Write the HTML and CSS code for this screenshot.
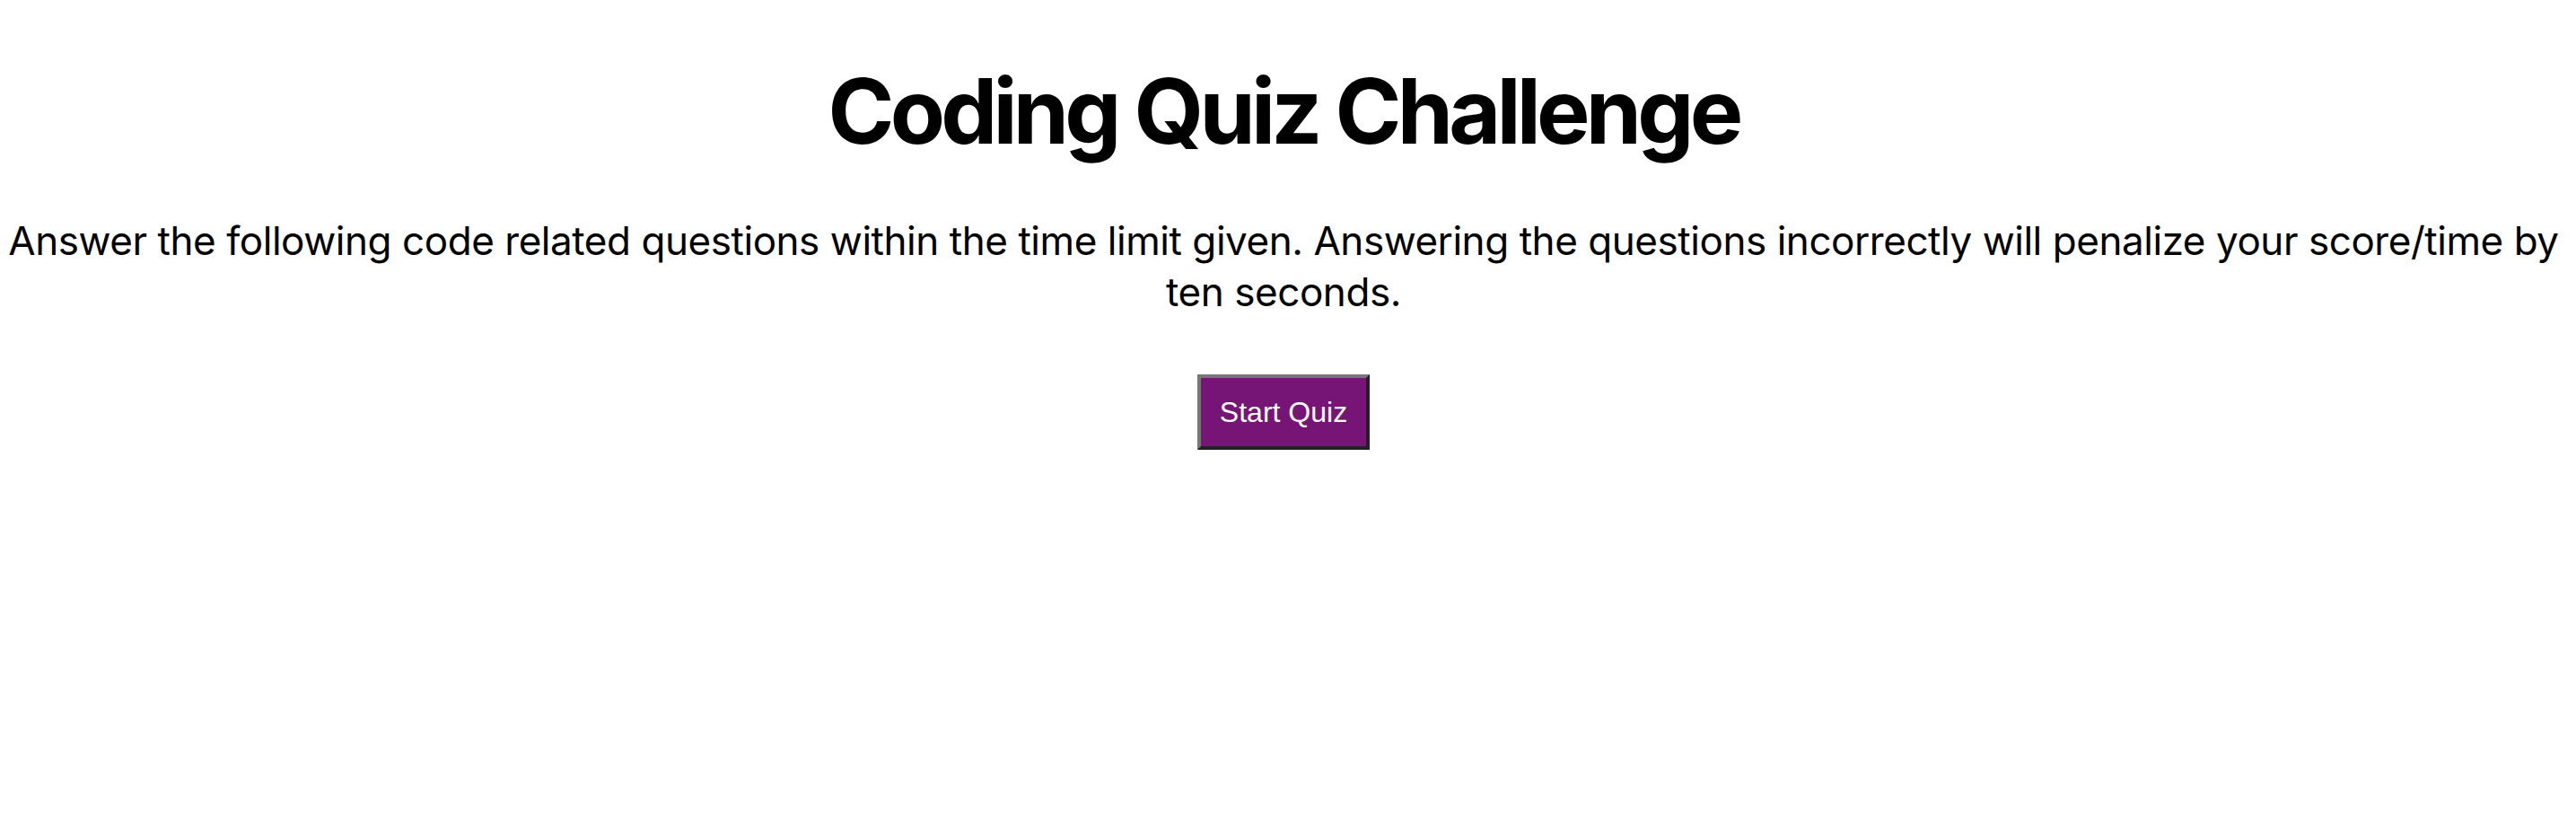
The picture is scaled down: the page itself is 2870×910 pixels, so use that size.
FILE: index.html
```html
<!DOCTYPE html>
<html lang="en">
<head>
<meta charset="utf-8">
<title>Coding Quiz Challenge</title>
<link rel="stylesheet" href="styles.css">
</head>
<body>
<main class="intro">
  <h1 class="intro-title">Coding Quiz Challenge</h1>
  <p class="intro-text">Answer the following code related questions within the time limit given. Answering the questions incorrectly will penalize your score/time by ten seconds.</p>
  <button class="start-btn" type="button">Start Quiz</button>
</main>
</body>
</html>
```

FILE: styles.css
```css
html, body {
  margin: 0;
  padding: 0;
  background: #ffffff;
}

body {
  font-family: Inter, "Noto Sans", "Liberation Sans", sans-serif;
  color: #000000;
}

.intro {
  display: flex;
  flex-direction: column;
  align-items: center;
  text-align: center;
  padding: 57px 10px 0 0;
}

.intro-title {
  margin: 0 0 50px;
  font-size: 100px;
  font-weight: 700;
  line-height: 133px;
  letter-spacing: -4.8px;
}

.intro-text {
  margin: 0 0 63px;
  font-size: 44px;
  font-weight: 400;
  line-height: 57px;
  letter-spacing: -0.45px;
}

.start-btn {
  font-family: "Liberation Sans", Arial, sans-serif;
  font-size: 32px;
  line-height: 36px;
  color: #ffffff;
  background: #771577;
  padding: 20px 21px;
  border-style: solid;
  border-width: 4px;
  border-color: #777777 #222222 #222222 #777777;
  cursor: pointer;
}
```
